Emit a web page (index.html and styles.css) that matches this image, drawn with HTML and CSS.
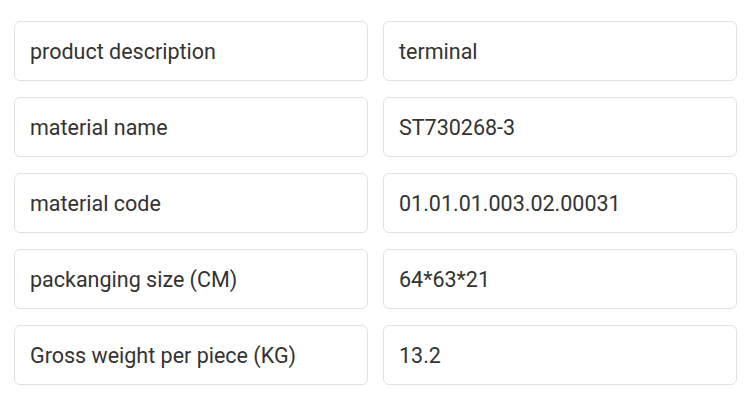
FILE: index.html
```html
<!DOCTYPE html>
<html>
<head>
<meta charset="utf-8">
<link rel="stylesheet" href="styles.css">
</head>
<body>
<div class="grid">
  <div class="cell">product description</div>
  <div class="cell">terminal</div>
  <div class="cell">material name</div>
  <div class="cell">ST730268-3</div>
  <div class="cell">material code</div>
  <div class="cell">01.01.01.003.02.00031</div>
  <div class="cell">packanging size (CM)</div>
  <div class="cell">64*63*21</div>
  <div class="cell">Gross weight per piece (KG)</div>
  <div class="cell">13.2</div>
</div>
</body>
</html>
```
FILE: styles.css
```css
html, body {
  margin: 0;
  padding: 0;
  background: #ffffff;
}
.grid {
  display: grid;
  grid-template-columns: 354px 354px;
  grid-auto-rows: 60px;
  column-gap: 15px;
  row-gap: 16px;
  padding: 21px 0 0 14px;
}
.cell {
  box-sizing: border-box;
  border: 1.5px solid #e1e1e1;
  border-radius: 6px;
  display: flex;
  align-items: center;
  padding: 0 0 0 15px;
  font-family: Roboto, "Liberation Sans", sans-serif;
  font-size: 21.5px;
  color: #333333;
}
```
